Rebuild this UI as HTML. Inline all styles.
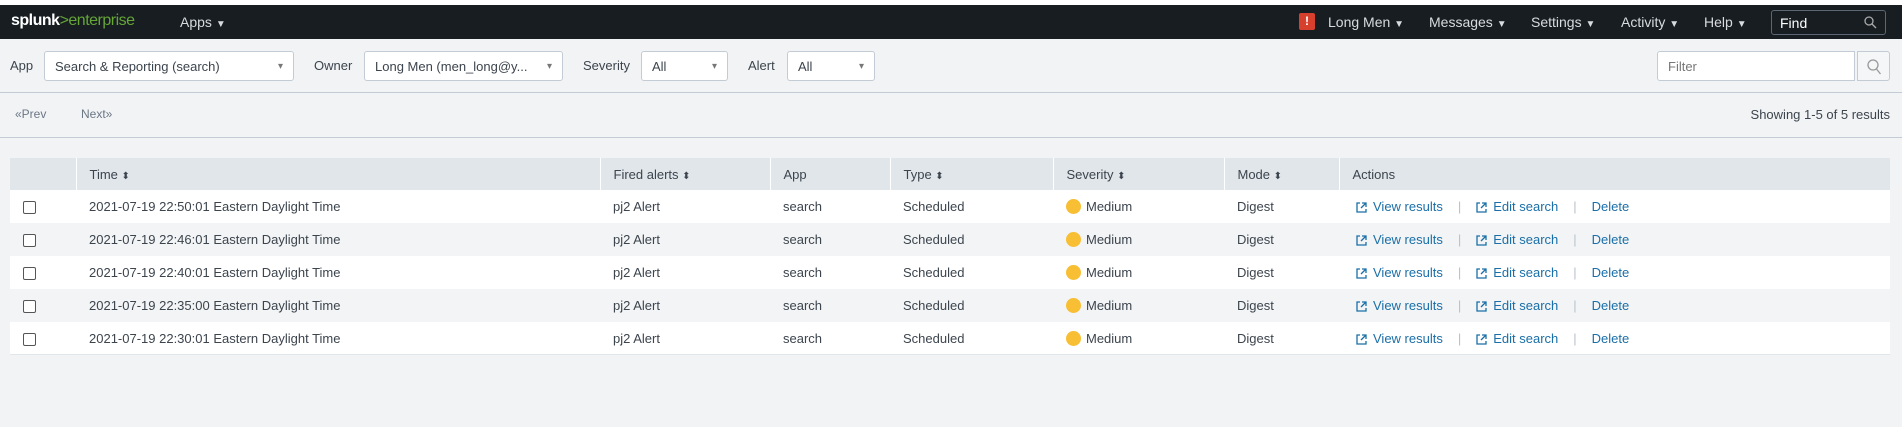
<!DOCTYPE html><html><head><style>
*{box-sizing:border-box;margin:0;padding:0}
body{width:1902px;height:427px;background:#f2f3f5;font-family:"Liberation Sans",sans-serif;font-size:13px;color:#3c444d;position:relative;overflow:hidden}
.a{position:absolute;white-space:nowrap}
.nav{position:absolute;left:0;top:5px;width:1902px;height:34px;background:#171d21;color:#d8dcdf;font-size:14px}
.top{position:absolute;left:0;top:0;width:1902px;height:5px;background:#fff}
.sel{position:absolute;top:51px;height:30px;background:#fff;border:1px solid #c3cbd4;border-radius:3px;padding:7px 10px;color:#3c444d;font-size:13px}
.sel:after{content:"▾";position:absolute;right:10px;top:9px;font-size:10px;color:#777}
.lbl{position:absolute;top:58px;font-size:13px;color:#3c444d}
.tri{font-size:10px}
table{position:absolute;left:10px;top:158px;width:1880px;border-collapse:collapse}
td,th{height:33px;padding:0 13px;text-align:left;font-weight:normal;white-space:nowrap}
th{background:#e1e6eb;height:32px;border-left:1px solid #fff;color:#3c444d}
th:first-child{border-left:none}
tr.w td{background:#fff}tr.g td{background:#f2f4f5}
.cb{display:inline-block;width:13px;height:13px;border:1px solid #555;border-radius:2px;background:#fff;vertical-align:middle}
.dot{display:inline-block;width:15px;height:15px;border-radius:50%;background:#f8be34;vertical-align:-3px;margin-right:5px}
.lk{color:#1a6fa8}
.sep{color:#b8c2cc;margin:0 15px}
.ic{display:inline-block;vertical-align:-2px;margin-right:6px}
</style></head><body>
<div class="top"></div>
<div class="nav">
<div class="a" style="left:11px;top:7px;font-size:16px;color:#fff;font-weight:bold;letter-spacing:-0.5px">splunk<span style="color:#65a637;font-weight:normal">&gt;enterprise</span></div>
<div class="a" style="left:180px;top:9px">Apps <span class="tri">▼</span></div>
<div class="a" style="left:1299px;top:8px;width:16px;height:17px;background:#d6402c;border-radius:2px;color:#fff;font-weight:bold;text-align:center;font-size:12px;line-height:17px">!</div>
<div class="a" style="left:1328px;top:9px">Long Men <span class="tri">▼</span></div>
<div class="a" style="left:1429px;top:9px">Messages <span class="tri">▼</span></div>
<div class="a" style="left:1531px;top:9px">Settings <span class="tri">▼</span></div>
<div class="a" style="left:1621px;top:9px">Activity <span class="tri">▼</span></div>
<div class="a" style="left:1704px;top:9px">Help <span class="tri">▼</span></div>
<div class="a" style="left:1771px;top:5px;width:115px;height:25px;border:1px solid #5c6773;border-radius:3px;padding:4px 8px;color:#fff">Find
<svg style="position:absolute;right:8px;top:5px" width="13" height="13" viewBox="0 0 13 13"><circle cx="5" cy="5" r="4" fill="none" stroke="#aaa" stroke-width="1.3"/><path d="M8 8l4 4" stroke="#aaa" stroke-width="1.3"/></svg></div>
</div>
<div class="lbl" style="left:10px">App</div>
<div class="sel" style="left:44px;width:250px">Search &amp; Reporting (search)</div>
<div class="lbl" style="left:314px">Owner</div>
<div class="sel" style="left:364px;width:199px">Long Men (men_long@y...</div>
<div class="lbl" style="left:583px">Severity</div>
<div class="sel" style="left:641px;width:87px">All</div>
<div class="lbl" style="left:748px">Alert</div>
<div class="sel" style="left:787px;width:88px">All</div>
<div class="a" style="left:1657px;top:51px;width:198px;height:30px;background:#fff;border:1px solid #c3cbd4;border-radius:3px 0 0 3px;padding:7px 10px;color:#777">Filter</div>
<div class="a" style="left:1857px;top:51px;width:33px;height:30px;background:#f5f6f7;border:1px solid #c3cbd4;border-radius:0 3px 3px 0">
<svg style="position:absolute;left:9px;top:7px" width="15" height="16" viewBox="0 0 15 16"><circle cx="6" cy="6" r="5" fill="none" stroke="#999" stroke-width="1.3"/><path d="M9.5 10l4 5" stroke="#999" stroke-width="1.3"/></svg></div>
<div class="a" style="left:0;top:92px;width:1902px;height:1px;background:#c3cbd4"></div>
<div class="a" style="left:15px;top:107px;color:#6b7785;font-size:12px">«Prev</div>
<div class="a" style="left:81px;top:107px;color:#6b7785;font-size:12px">Next»</div>
<div class="a" style="right:12px;top:107px">Showing 1-5 of 5 results</div>
<div class="a" style="left:0;top:137px;width:1902px;height:1px;background:#c3cbd4"></div>
<table>
<tr><th style="width:66px"></th><th style="width:524px">Time <span class="tri">⬍</span></th><th style="width:170px">Fired alerts <span class="tri">⬍</span></th><th style="width:120px">App</th><th style="width:163px">Type <span class="tri">⬍</span></th><th style="width:171px">Severity <span class="tri">⬍</span></th><th style="width:115px">Mode <span class="tri">⬍</span></th><th>Actions</th></tr>
<tr class="w"><td><span class="cb"></span></td><td>2021-07-19 22:50:01 Eastern Daylight Time</td><td>pj2 Alert</td><td>search</td><td>Scheduled</td><td><span class="dot"></span>Medium</td><td>Digest</td><td class="act"></td></tr>
<tr class="g"><td><span class="cb"></span></td><td>2021-07-19 22:46:01 Eastern Daylight Time</td><td>pj2 Alert</td><td>search</td><td>Scheduled</td><td><span class="dot"></span>Medium</td><td>Digest</td><td class="act"></td></tr>
<tr class="w"><td><span class="cb"></span></td><td>2021-07-19 22:40:01 Eastern Daylight Time</td><td>pj2 Alert</td><td>search</td><td>Scheduled</td><td><span class="dot"></span>Medium</td><td>Digest</td><td class="act"></td></tr>
<tr class="g"><td><span class="cb"></span></td><td>2021-07-19 22:35:00 Eastern Daylight Time</td><td>pj2 Alert</td><td>search</td><td>Scheduled</td><td><span class="dot"></span>Medium</td><td>Digest</td><td class="act"></td></tr>
<tr class="w"><td><span class="cb"></span></td><td>2021-07-19 22:30:01 Eastern Daylight Time</td><td>pj2 Alert</td><td>search</td><td>Scheduled</td><td><span class="dot"></span>Medium</td><td>Digest</td><td class="act"></td></tr>
</table>
<div class="a" style="left:10px;top:354px;width:1880px;height:1px;background:#e1e6eb"></div>
<script>
var ic='<svg class="ic" width="11" height="11" viewBox="0 0 11 11"><path d="M4 1H1v9h9V7M6 1h4v4M10 1L5 6" fill="none" stroke="#1a6fa8" stroke-width="1.3"/></svg>';
document.querySelectorAll('.act').forEach(function(t){t.style.paddingLeft='17px';t.innerHTML='<span class="lk">'+ic+'View results</span><span class="sep">|</span><span class="lk">'+ic+'Edit search</span><span class="sep">|</span><span class="lk">Delete</span>';});
</script>
</body></html>
